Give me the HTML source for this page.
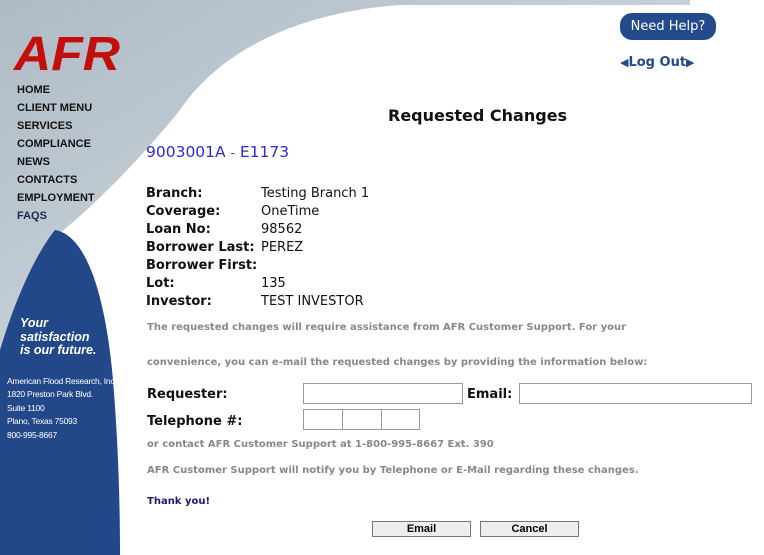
<!DOCTYPE html>
<html><head><meta charset="utf-8"><style>
*{margin:0;padding:0;box-sizing:border-box}
body{width:764px;height:555px;position:relative;overflow:hidden;background:#fff;font-family:"DejaVu Sans","Liberation Sans",sans-serif}
.a{position:absolute;white-space:nowrap}
.nav{left:17px;font:bold 11px "Liberation Sans",Arial,sans-serif;color:#111}
.lb{left:146px;font-weight:bold;font-size:13px;color:#111}
.v{left:261px;font-size:13px;color:#111}
.g{left:147px;font-weight:bold;font-size:10px;color:#888}
.in{position:absolute;border:1px solid #999;background:#fff}
.btn{position:absolute;top:521px;height:16px;width:99px;border:1px solid #777;background:#eee;font:bold 11px "Liberation Sans",Arial,sans-serif;text-align:center;line-height:14px;color:#000}
.ad{left:7px;font:8.5px "Liberation Sans",Arial,sans-serif;color:#fff;letter-spacing:-0.25px}
</style></head><body>
<svg class="a" style="left:0;top:0" width="764" height="555">
<defs>
<linearGradient id="gg" x1="0" y1="0" x2="1" y2="1">
<stop offset="0" stop-color="#aebbc5"/><stop offset="0.5" stop-color="#c6d0d8"/><stop offset="1" stop-color="#9fb0bf"/></linearGradient>
</defs>
<path d="M0,0 H690 V5 H400 C300,12 220,50 180,110 C140,160 80,220 50,240 L0,400 Z" fill="url(#gg)"/>
<path d="M55,230 C85,235 105,290 113,380 C118,440 120,500 120,555 H0 V350 C15,300 35,255 55,230 Z" fill="#22488a"/>
<text x="14" y="70" font-family="Liberation Sans,sans-serif" font-weight="bold" font-style="italic" font-size="48" fill="#c40d0d" textLength="106" lengthAdjust="spacingAndGlyphs">AFR</text>
</svg>
<div class="a nav" style="top:84px">HOME</div>
<div class="a nav" style="top:102px">CLIENT MENU</div>
<div class="a nav" style="top:120px">SERVICES</div>
<div class="a nav" style="top:138px">COMPLIANCE</div>
<div class="a nav" style="top:156px">NEWS</div>
<div class="a nav" style="top:174px">CONTACTS</div>
<div class="a nav" style="top:192px">EMPLOYMENT</div>
<div class="a nav" style="top:210px;color:#1c2a4a">FAQS</div>
<div class="a" style="left:20px;top:317px;font:italic bold 12.5px/13.5px 'Liberation Sans',Arial,sans-serif;color:#fff">Your<br>satisfaction<br>is our future.</div>
<div class="a ad" style="top:376px">American Flood Research, Inc.</div>
<div class="a ad" style="top:389px">1820 Preston Park Blvd.</div>
<div class="a ad" style="top:403px">Suite 1100</div>
<div class="a ad" style="top:416px">Plano, Texas 75093</div>
<div class="a ad" style="top:430px">800-995-8667</div>
<div class="a" style="left:620px;top:13px;width:96px;height:27px;border-radius:12px;background:#234b8c;color:#fff;font-size:13px;text-align:center;line-height:27px">Need Help?</div>
<div class="a" style="left:620px;top:55px;font-weight:bold;font-size:13px;color:#234b8c"><span style="font-size:11px">◀</span>Log Out<span style="font-size:11px">▶</span></div>
<div class="a" style="left:388px;top:106px;font-weight:bold;font-size:16px;color:#111">Requested Changes</div>
<div class="a" style="left:146px;top:143px;font-size:15.5px;color:#2a2ae0">9003001A <span style="font-size:12px">-</span> E1173</div>
<div class="a lb" style="top:186px">Branch:</div><div class="a v" style="top:186px">Testing Branch 1</div>
<div class="a lb" style="top:204px">Coverage:</div><div class="a v" style="top:204px">OneTime</div>
<div class="a lb" style="top:222px">Loan No:</div><div class="a v" style="top:222px">98562</div>
<div class="a lb" style="top:240px">Borrower Last:</div><div class="a v" style="top:240px">PEREZ</div>
<div class="a lb" style="top:258px">Borrower First:</div>
<div class="a lb" style="top:276px">Lot:</div><div class="a v" style="top:276px">135</div>
<div class="a lb" style="top:294px">Investor:</div><div class="a v" style="top:294px">TEST INVESTOR</div>
<div class="a g" style="top:322px">The requested changes will require assistance from AFR Customer Support. For your</div>
<div class="a g" style="top:357px">convenience, you can e-mail the requested changes by providing the information below:</div>
<div class="a lb" style="left:147px;top:387px">Requester:</div>
<div class="in" style="left:303px;top:383px;width:160px;height:21px"></div>
<div class="a lb" style="left:467px;top:387px">Email:</div>
<div class="in" style="left:519px;top:383px;width:233px;height:21px"></div>
<div class="a lb" style="left:147px;top:414px">Telephone #:</div>
<div class="in" style="left:303px;top:409px;width:40px;height:21px"></div>
<div class="in" style="left:342px;top:409px;width:40px;height:21px"></div>
<div class="in" style="left:381px;top:409px;width:39px;height:21px"></div>
<div class="a g" style="top:439px">or contact AFR Customer Support at 1-800-995-8667 Ext. 390</div>
<div class="a g" style="top:465px">AFR Customer Support will notify you by Telephone or E-Mail regarding these changes.</div>
<div class="a g" style="top:496px;color:#1c1c6e">Thank you!</div>
<div class="btn" style="left:372px">Email</div>
<div class="btn" style="left:480px">Cancel</div>
</body></html>
